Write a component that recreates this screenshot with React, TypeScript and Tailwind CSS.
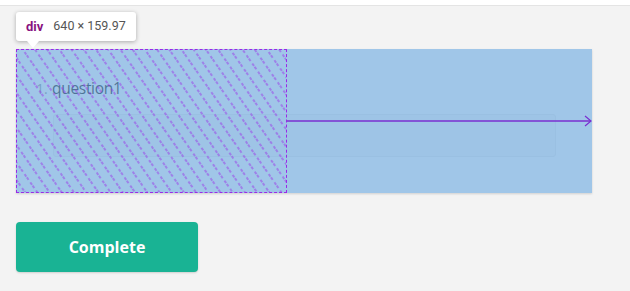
export default function App() {
  return (
    <div className="min-h-[291px] w-[630px] bg-[#f3f3f3] font-['Open_Sans',sans-serif]">
      <div className="h-[6px] border-b border-[#e4e4e4] bg-white" />

      <div className="relative px-4 pt-[43px]">
        {/* survey question panel */}
        <div className="relative h-[144px] w-[576px] bg-white shadow-[0_1px_2px_rgba(0,0,0,0.15)]">
          <div className="flex items-baseline pl-[20px] pt-[28px] text-[15.5px] leading-[22px]">
            <span className="w-[16px] text-[#909090] text-[14px]">1.</span>
            <span className="text-[#101010] [letter-spacing:-0.3px]">question1</span>
          </div>
          <div className="ml-[37px] mt-[14px] h-[43px] w-[503px] rounded-[3px] border border-[#ececec] bg-[#f9f9f9]" />

          {/* devtools highlight overlay */}
          <div className="absolute inset-0 flex bg-[rgba(111,168,220,0.66)]">
            <div className="relative h-full w-[271px] border border-dashed border-[#9a2ae8]">
              <svg className="absolute inset-0 h-full w-full" aria-hidden="true">
                <defs>
                  <pattern id="hatch" width="10" height="10" patternUnits="userSpaceOnUse" patternTransform="rotate(-35)">
                    <line x1="5" y1="0" x2="5" y2="10" stroke="#9a2ae8" strokeWidth="1.1" strokeDasharray="3 3" />
                  </pattern>
                </defs>
                <rect width="100%" height="100%" fill="url(#hatch)" opacity="0.8" />
              </svg>
            </div>
            <svg className="mt-[66px] h-[12px] flex-1" viewBox="0 0 305 12" preserveAspectRatio="none" aria-hidden="true">
              <line x1="0" y1="6" x2="304" y2="6" stroke="#7a2fd0" strokeWidth="1.4" />
              <polyline points="298,1 304,6 298,11" fill="none" stroke="#7a2fd0" strokeWidth="1.2" />
            </svg>
          </div>
        </div>

        {/* inspector tooltip */}
        <div className="absolute left-4 top-[6px] flex h-[29px] items-center gap-[10px] rounded-[3px] bg-white px-[10px] font-['Roboto',sans-serif] shadow-[0_1px_4px_rgba(0,0,0,0.3)]">
          <span className="text-[13px] font-bold text-[#881280]">div</span>
          <span className="text-[12.5px] text-[#555]">640 × 159.97</span>
          <div className="absolute left-[11px] top-[29px] h-0 w-0 border-x-[6px] border-t-[7px] border-x-transparent border-t-white" />
        </div>

        <button
          type="button"
          className="mt-[29px] h-[50px] w-[182px] rounded-[4px] bg-[#19b394] text-[16px] font-bold text-white shadow-[0_1px_2px_rgba(0,0,0,0.15)]"
        >
          Complete
        </button>
      </div>
    </div>
  );
}
